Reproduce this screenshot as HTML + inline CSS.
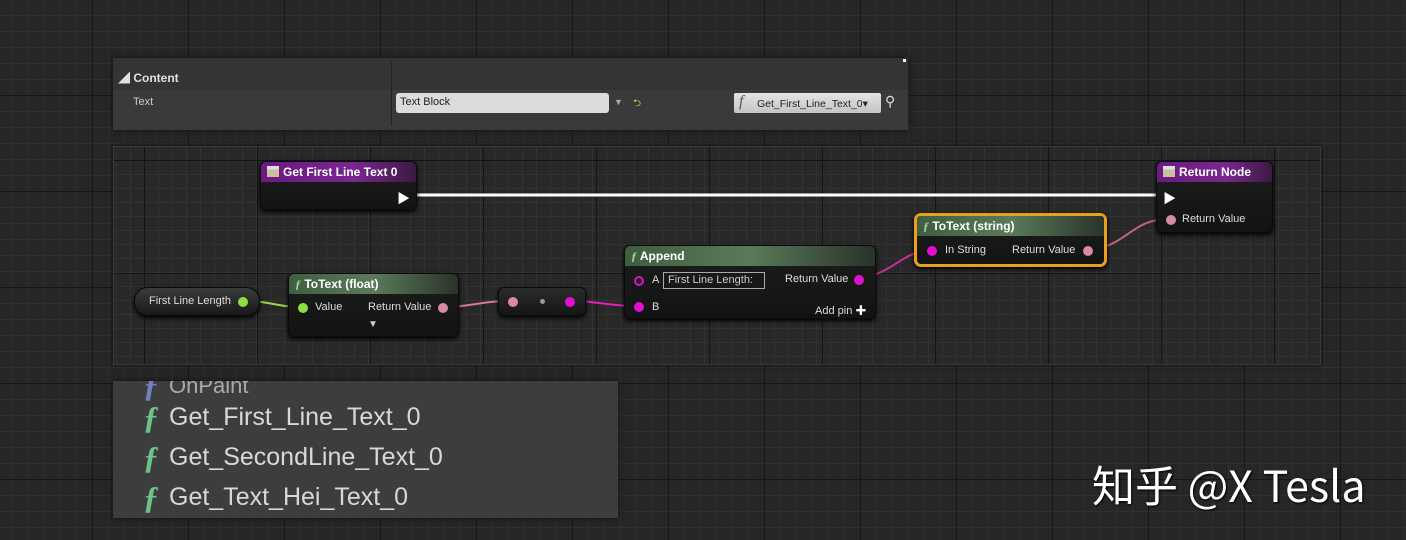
<!DOCTYPE html>
<html><head><meta charset="utf-8">
<style>
*{margin:0;padding:0;box-sizing:border-box}
body{width:1406px;height:540px;overflow:hidden;position:relative;font-family:"Liberation Sans","Noto Sans CJK SC",sans-serif;
background-color:#262626;
background-image:
linear-gradient(#161616 1px,transparent 1px),linear-gradient(90deg,#161616 1px,transparent 1px),
linear-gradient(#303030 1px,transparent 1px),linear-gradient(90deg,#303030 1px,transparent 1px);
background-size:96px 96px,96px 96px,16px 16px,16px 16px;
background-position:0 95px,92px 0,0 15px,12px 0;}
.abs{position:absolute}
.panel{position:absolute;left:113px;top:58px;width:795px;height:72px;background:#3a3a3a;box-shadow:0 0 6px #111}
.graph{position:absolute;left:113px;top:146px;width:1208px;height:219px;background-color:#282828;
background-image:
linear-gradient(#141414 1px,transparent 1px),linear-gradient(90deg,#141414 1px,transparent 1px),
linear-gradient(#323232 1px,transparent 1px),linear-gradient(90deg,#323232 1px,transparent 1px);
background-size:113px 113px,113px 113px,14px 14px,14px 14px;
background-position:0 13px,30px 0,0 13px,2px 0;box-shadow:0 0 5px #111;border:1px solid #3a3a3a}
.node{position:absolute;background:linear-gradient(#1c1e1c,#121312);border-radius:6px;box-shadow:0 2px 5px #000;border:1px solid #0a0a0a;color:#ddd;font-size:11px}
.hd{height:20px;border-radius:5px 5px 0 0;color:#fff;font-size:12px;font-weight:bold;padding:3px 0 0 6px;white-space:nowrap}
.pur{background:linear-gradient(90deg,#6a1a80,#7a2690 60%,#3a1a40)}
.grn{background:linear-gradient(90deg,#3f5e3f,#5a7a5a 50%,#2a332a)}
.pin{position:absolute;width:10px;height:10px;border-radius:50%}
.t{position:absolute;white-space:nowrap;font-size:11px;color:#ddd}
.f{font-family:"Liberation Serif",serif;font-style:italic;color:#9fd89f;font-weight:bold}
.ico{display:inline-block;width:12px;height:11px;background:linear-gradient(#ddd 30%,#c8c0a0 30%);vertical-align:-1px;margin-right:4px}
.dd{position:absolute;left:113px;top:381px;width:505px;height:137px;background:#3d3d3d;box-shadow:0 0 6px #111;overflow:hidden}
.dd .it{position:absolute;left:30px;font-size:25px;color:#d8d8d8;white-space:nowrap}
.dd .it i{font-family:"Liberation Serif",serif;color:#6cc38a;font-weight:bold;font-size:32px;margin-right:10px;vertical-align:-3px}
</style></head><body>

<div class="panel">
 <div class="abs" style="left:0;top:0;width:795px;height:32px;background:#343434"></div>
 <div class="abs" style="left:278px;top:4px;width:1px;height:64px;background:#222"></div>
 <div class="t" style="left:5px;top:11px;font-size:12px;font-weight:bold;color:#e0e0e0">◢ Content</div>
 <div class="t" style="left:20px;top:38px;color:#ccc">Text</div>
 <div class="abs" style="left:283px;top:35px;width:213px;height:20px;background:#dcdcdc;border-radius:3px"></div>
 <div class="t" style="left:287px;top:38px;color:#222">Text Block</div>
 <div class="t" style="left:501px;top:39px;color:#aaa;font-size:9px">▼</div>
 <div class="t" style="left:520px;top:38px;color:#dede40;font-size:10px">⮌</div>
 <div class="abs" style="left:621px;top:35px;width:147px;height:20px;background:linear-gradient(#e4e4e4,#c4c4c4);border-radius:2px"></div>
 <div class="t" style="left:626px;top:35px;color:#556;font-size:16px;font-family:'Liberation Serif',serif;font-style:italic">f</div>
 <div class="t" style="left:644px;top:40px;color:#222;font-size:10.5px">Get_First_Line_Text_0▾</div>
 <div class="t" style="left:772px;top:35px;color:#ddd;font-size:14px">⚲</div>
 <div class="abs" style="left:790px;top:1px;width:3px;height:3px;background:#fff"></div>
</div>

<div class="graph"></div>
<svg class="abs" style="left:0;top:0" width="1406" height="540">
 <line x1="410" y1="195" x2="1162" y2="195" stroke="#fff" stroke-width="3"/>
 <path d="M246 301 C270 301,276 307,302 307" stroke="#9ad84a" stroke-width="2" fill="none"/>
 <path d="M444 307 C470 307,480 301,512 301" stroke="#d07aa0" stroke-width="2" fill="none"/>
 <path d="M570 301 C600 301,605 306,638 306" stroke="#e020c0" stroke-width="2" fill="none"/>
 <path d="M860 279 C900 270,900 251,932 251" stroke="#c0309a" stroke-width="2" fill="none"/>
 <path d="M1087 251 C1130 245,1130 219,1170 219" stroke="#c0608a" stroke-width="2" fill="none"/>
</svg>

<div class="node" style="left:260px;top:161px;width:157px;height:49px">
 <div class="hd pur"><span class="ico"></span>Get First Line Text 0</div>
 <div class="t" style="left:136px;top:26px;color:#fff;font-size:13px">▶</div>
</div>

<div class="node" style="left:1156px;top:161px;width:117px;height:72px">
 <div class="hd pur"><span class="ico"></span>Return Node</div>
 <div class="t" style="left:6px;top:26px;color:#fff;font-size:13px">▶</div>
 <div class="pin" style="left:9px;top:53px;background:#d888aa"></div>
 <div class="t" style="left:25px;top:51px">Return Value</div>
</div>

<div class="node" style="left:134px;top:287px;width:126px;height:29px;border-radius:14px;background:linear-gradient(#3a3c3a,#181818)">
 <div class="t" style="left:14px;top:7px">First Line Length</div>
 <div class="pin" style="left:103px;top:9px;background:#8de040"></div>
</div>

<div class="node" style="left:288px;top:273px;width:171px;height:64px">
 <div class="hd grn"><span class="f">ƒ</span> ToText (float)</div>
 <div class="pin" style="left:9px;top:29px;background:#8de040"></div>
 <div class="t" style="left:26px;top:27px">Value</div>
 <div class="t" style="left:79px;top:27px">Return Value</div>
 <div class="pin" style="left:149px;top:29px;background:#d888aa"></div>
 <div class="t" style="left:79px;top:45px;color:#ccc;font-size:10px">▼</div>
</div>

<div class="node" style="left:498px;top:287px;width:88px;height:29px;background:linear-gradient(#2a2c2a,#151515)">
 <div class="pin" style="left:9px;top:9px;background:#d888aa"></div>
 <div class="abs" style="left:41px;top:11px;width:5px;height:5px;border-radius:50%;background:#999"></div>
 <div class="pin" style="left:66px;top:9px;background:#e010d0"></div>
</div>

<div class="node" style="left:624px;top:245px;width:252px;height:74px">
 <div class="hd grn"><span class="f">ƒ</span> Append</div>
 <div class="pin" style="left:9px;top:30px;border:2px solid #e010d0"></div>
 <div class="t" style="left:27px;top:28px">A</div>
 <div class="abs" style="left:38px;top:26px;width:102px;height:17px;border:1px solid #aaa"></div>
 <div class="t" style="left:43px;top:28px;color:#ccc">First Line Length:</div>
 <div class="t" style="left:160px;top:27px">Return Value</div>
 <div class="pin" style="left:229px;top:29px;background:#e010d0"></div>
 <div class="pin" style="left:9px;top:56px;background:#e010d0"></div>
 <div class="t" style="left:27px;top:55px">B</div>
 <div class="t" style="left:190px;top:56px">Add pin <b style="color:#fff">✚</b></div>
</div>

<div class="node" style="left:914px;top:213px;width:193px;height:54px;border:3px solid #e8a020;border-radius:7px">
 <div class="hd grn" style="border-radius:3px 3px 0 0"><span class="f">ƒ</span> ToText (string)</div>
 <div class="pin" style="left:10px;top:30px;background:#e010d0"></div>
 <div class="t" style="left:28px;top:28px">In String</div>
 <div class="t" style="left:95px;top:28px">Return Value</div>
 <div class="pin" style="left:166px;top:30px;background:#d888aa"></div>
</div>

<div class="dd">
 <div class="it" style="top:-14px;color:#aaa;font-size:22px"><i style="color:#7080c0">ƒ</i>OnPaint</div>
 <div class="it" style="top:18px"><i>ƒ</i>Get_First_Line_Text_0</div>
 <div class="it" style="top:58px"><i>ƒ</i>Get_SecondLine_Text_0</div>
 <div class="it" style="top:98px"><i>ƒ</i>Get_Text_Hei_Text_0</div>
</div>

<div class="t" style="left:1092px;top:453px;font-size:43px;color:#fff;font-family:'Noto Sans CJK SC','Liberation Sans',sans-serif;text-shadow:1px 1px 2px #000">知乎 @X Tesla</div>
</body></html>
